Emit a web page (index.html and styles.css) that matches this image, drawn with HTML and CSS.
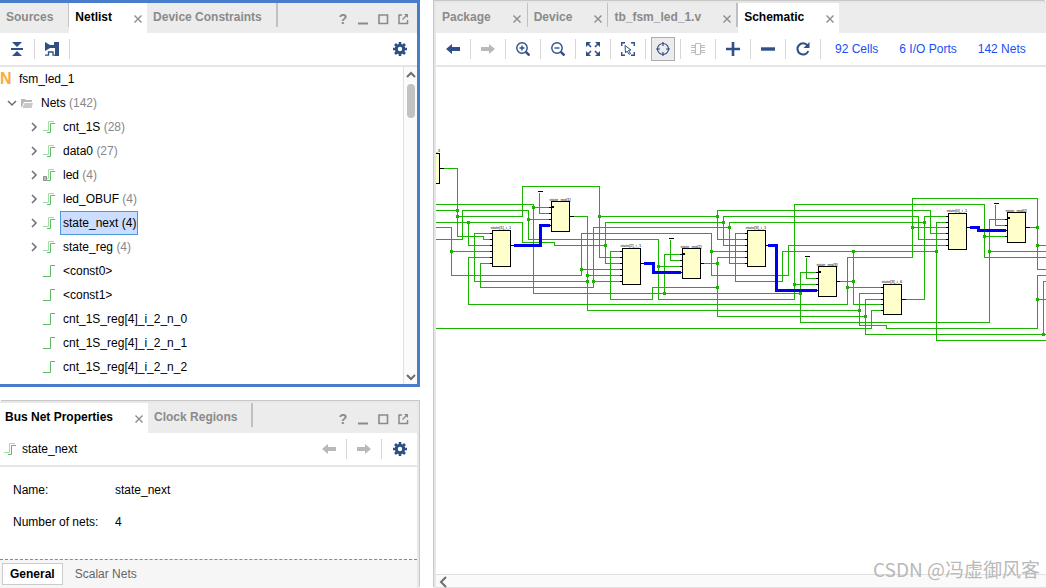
FILE: index.html
```html
<!DOCTYPE html>
<html lang="en">
<head>
    <meta charset="UTF-8">
    <title>fsm_led_1 - Schematic</title>
    <link rel="stylesheet" href="styles.css">
</head>
<body>

<!-- shared icons -->
<svg class="defs" aria-hidden="true">
    <symbol id="i-close" viewBox="0 0 8 8"><path d="M.5.5l7 7M7.500.5l-7 7" stroke="#8c8c8c" stroke-width="1.4"/></symbol>
    <symbol id="i-min" viewBox="0 0 12 12"><path d="M1 10.500h10" stroke="#8a8a8a" stroke-width="2"/></symbol>
    <symbol id="i-max" viewBox="0 0 12 12"><path d="M2 2h8.500v8.500H2z" fill="none" stroke="#8a8a8a" stroke-width="1.600"/></symbol>
    <symbol id="i-pop" viewBox="0 0 12 12"><path d="M5 2H2v8.500h8.500V7" fill="none" stroke="#8a8a8a" stroke-width="1.500"/><path d="M5.500 6.500L10 2" stroke="#8a8a8a" stroke-width="1.300"/><path d="M7 1h4v4z" fill="#8a8a8a"/></symbol>
    <symbol id="i-gear" viewBox="0 0 14 14"><circle cx="7" cy="7" r="3.700" fill="none" stroke="#2f4f86" stroke-width="3"/><path d="M7 0v3M7 11v3M0 7h3M11 7h3M2 2l2 2M10 10l2 2M12 2l-2 2M4 10l-2 2" stroke="#2f4f86" stroke-width="2.600"/></symbol>
    <symbol id="i-back" viewBox="0 0 14 14"><path d="M0 7l6-5v3h8v4H6v3z" fill="currentColor"/></symbol>
    <symbol id="i-fwd" viewBox="0 0 14 14"><path d="M14 7L8 2v3H0v4h8v3z" fill="currentColor"/></symbol>
    <symbol id="i-bus" viewBox="0 0 12 12"><path d="M0 9.500h5.500v-9H11" fill="none" stroke="#a5dba7"/><path d="M4 11.500h3.500v-9H12" fill="none" stroke="#5dba62"/></symbol>
    <symbol id="i-net" viewBox="0 0 12 12"><path d="M0 11.500h7.500V.5H12" fill="none" stroke="#5dba62"/></symbol>
    <symbol id="i-right" viewBox="0 0 12 12"><path d="M4 2l4 4-4 4" fill="none" stroke="#6e6e6e" stroke-width="1.500"/></symbol>
    <symbol id="i-down" viewBox="0 0 12 12"><path d="M2 4l4 4 4-4" fill="none" stroke="#6e6e6e" stroke-width="1.500"/></symbol>
    <symbol id="i-folder" viewBox="0 0 12 12"><path d="M0 10V2h4l1 1h6v2H3L1 10z" fill="#b9b9b9"/><path d="M3.500 6H12l-1.500 5H1.500z" fill="#c9c9c9"/></symbol>
</svg>

<div class="workspace">
    <div class="side">

        <section class="panel netlist">
            <header class="tabs">
                <button class="tab plain">Sources</button>
                <button class="tab active">Netlist <svg class="close"><use href="#i-close"/></svg></button>
                <button class="tab plain last">Device Constraints</button>
                <div class="window-buttons">
                    <button aria-label="Help">?</button>
                    <button aria-label="Minimize"><svg><use href="#i-min"/></svg></button>
                    <button aria-label="Maximize"><svg><use href="#i-max"/></svg></button>
                    <button aria-label="Float"><svg><use href="#i-pop"/></svg></button>
                </div>
            </header>
            <div class="toolbar">
                <button class="tool" aria-label="Collapse all"><svg viewBox="0 0 14 14"><path d="M2 0h10L7 5zM1 6h12v2H1zM2 14h10L7 9z" fill="#2f4f86"/></svg></button>
                <button class="tool" aria-label="Show in schematic"><svg viewBox="0 0 14 14"><path d="M0 0l5 3h4V0h5v14h-4V6H5L0 9z" fill="#2f4f86"/><path d="M0 13.200h3.500V10H8v3.200h3" fill="none" stroke="#2f4f86" stroke-width="1.300"/></svg></button>
                <button class="tool push" aria-label="Settings"><svg><use href="#i-gear"/></svg></button>
            </div>
            <div class="tree-area">
                <ul class="tree">
                    <li><div class="row root"><span class="n-icon">N</span><span class="label">fsm_led_1</span></div></li>
                    <li><div class="row level1"><svg><use href="#i-down"/></svg><svg><use href="#i-folder"/></svg><span class="label">Nets <em>(142)</em></span></div>
                        <ul>
                            <li class="row"><svg><use href="#i-right"/></svg><svg><use href="#i-bus"/></svg><span class="label">cnt_1S <em>(28)</em></span></li>
                            <li class="row"><svg><use href="#i-right"/></svg><svg><use href="#i-bus"/></svg><span class="label">data0 <em>(27)</em></span></li>
                            <li class="row"><svg><use href="#i-right"/></svg><svg viewBox="0 0 12 12"><use href="#i-bus"/><path d="M.5 7.500h3v4h-3z" fill="#bbb" stroke="#8f8f8f"/></svg><span class="label">led <em>(4)</em></span></li>
                            <li class="row"><svg><use href="#i-right"/></svg><svg><use href="#i-bus"/></svg><span class="label">led_OBUF <em>(4)</em></span></li>
                            <li class="row"><svg><use href="#i-right"/></svg><svg><use href="#i-bus"/></svg><span class="label selected">state_next <em>(4)</em></span></li>
                            <li class="row"><svg><use href="#i-right"/></svg><svg><use href="#i-bus"/></svg><span class="label">state_reg <em>(4)</em></span></li>
                            <li class="row leaf"><svg><use href="#i-net"/></svg><span class="label">&lt;const0&gt;</span></li>
                            <li class="row leaf"><svg><use href="#i-net"/></svg><span class="label">&lt;const1&gt;</span></li>
                            <li class="row leaf"><svg><use href="#i-net"/></svg><span class="label">cnt_1S_reg[4]_i_2_n_0</span></li>
                            <li class="row leaf"><svg><use href="#i-net"/></svg><span class="label">cnt_1S_reg[4]_i_2_n_1</span></li>
                            <li class="row leaf"><svg><use href="#i-net"/></svg><span class="label">cnt_1S_reg[4]_i_2_n_2</span></li>
                        </ul>
                    </li>
                </ul>
                <div class="scrollbar">
                    <svg viewBox="0 0 12 12"><path d="M2 8l4-4 4 4" fill="none" stroke="#6e6e6e" stroke-width="2"/></svg>
                    <span class="thumb"></span>
                    <svg viewBox="0 0 12 12"><path d="M2 4l4 4 4-4" fill="none" stroke="#6e6e6e" stroke-width="2"/></svg>
                </div>
            </div>
        </section>

        <section class="panel properties">
            <header class="tabs">
                <button class="tab active">Bus Net Properties <svg class="close"><use href="#i-close"/></svg></button>
                <button class="tab plain last">Clock Regions</button>
                <div class="window-buttons">
                    <button aria-label="Help">?</button>
                    <button aria-label="Minimize"><svg><use href="#i-min"/></svg></button>
                    <button aria-label="Maximize"><svg><use href="#i-max"/></svg></button>
                    <button aria-label="Float"><svg><use href="#i-pop"/></svg></button>
                </div>
            </header>
            <div class="toolbar">
                <span class="object"><svg><use href="#i-bus"/></svg>state_next</span>
                <button class="tool off push" aria-label="Previous"><svg><use href="#i-back"/></svg></button>
                <button class="tool off" aria-label="Next"><svg><use href="#i-fwd"/></svg></button>
                <button class="tool" aria-label="Settings"><svg><use href="#i-gear"/></svg></button>
            </div>
            <dl class="props">
                <dt>Name:</dt><dd>state_next</dd>
                <dt>Number of nets:</dt><dd>4</dd>
            </dl>
            <nav class="subtabs">
                <button class="current">General</button>
                <button>Scalar Nets</button>
            </nav>
        </section>
    </div>

    <main class="panel schematic">
        <header class="tabs">
            <button class="tab">Package <svg class="close"><use href="#i-close"/></svg></button>
            <button class="tab">Device <svg class="close"><use href="#i-close"/></svg></button>
            <button class="tab last">tb_fsm_led_1.v <svg class="close"><use href="#i-close"/></svg></button>
            <button class="tab active">Schematic <svg class="close"><use href="#i-close"/></svg></button>
        </header>
        <div class="toolbar">
            <button class="tool" aria-label="Back"><svg><use href="#i-back"/></svg></button>
            <button class="tool off" aria-label="Forward"><svg><use href="#i-fwd"/></svg></button>
            <button class="tool" aria-label="Zoom in"><svg viewBox="0 0 14 14" fill="none" stroke="#2f4f86"><circle cx="6" cy="6" r="5.200" stroke-width="1.400"/><path d="M9.800 9.800L13.500 13.500" stroke-width="2.400"/><path d="M3.500 6h5M6 3.500v5" stroke-width="1.400"/></svg></button>
            <button class="tool" aria-label="Zoom out"><svg viewBox="0 0 14 14" fill="none" stroke="#2f4f86"><circle cx="6" cy="6" r="5.200" stroke-width="1.400"/><path d="M9.800 9.800L13.500 13.500" stroke-width="2.400"/><path d="M3.500 6h5" stroke-width="1.400"/></svg></button>
            <button class="tool" aria-label="Zoom fit"><svg viewBox="0 0 14 14"><path d="M0 0h5L0 5zM14 0v5L9 0zM0 14V9l5 5zM14 14H9l5-5z" fill="#2f4f86"/><path d="M1 1l4 4M13 1L9 5M1 13l4-4M13 13L9 9" stroke="#2f4f86" stroke-width="1.600"/></svg></button>
            <button class="tool" aria-label="Zoom to selection"><svg viewBox="0 0 14 14" fill="none" stroke="#2f4f86"><path d="M.7 4V.7H4M10 .7h3.300V4M13.300 10v3.300H10M4 13.300H.7V10" stroke-width="1.400"/><path d="M4 3.500l6 4.500-2.500.3 2 3.200-1.500.8-1.800-3.200L4.500 11z"/></svg></button>
            <button class="tool on" aria-label="Autofit selection"><svg viewBox="0 0 14 14" fill="none" stroke="#2f4f86"><circle cx="7" cy="7" r="5.500" stroke-width="1.200"/><path d="M7 0v4M7 10v4M0 7h4M10 7h4" stroke-width="1.200"/></svg></button>
            <button class="tool off" aria-label="Expand cell"><svg viewBox="0 0 14 14" fill="none" stroke="#bdbdbd"><path d="M4.500 1.500h5v11h-5z"/><path d="M0 3.500h4v2H0M0 8.500h4v2H0M14 3.500h-4v2h4M14 8.500h-4v2h4"/></svg></button>
            <button class="tool" aria-label="Add"><svg viewBox="0 0 14 14"><path d="M0 7h14M7 0v14" stroke="#2f4f86" stroke-width="2.600"/></svg></button>
            <button class="tool" aria-label="Remove"><svg viewBox="0 0 14 14"><path d="M0 7h14" stroke="#2f4f86" stroke-width="3.400"/></svg></button>
            <button class="tool" aria-label="Reload"><svg viewBox="0 0 14 14"><path d="M11.500 3.500A5.600 5.600 0 1 0 12.300 9" fill="none" stroke="#2f4f86" stroke-width="2"/><path d="M13.500 0v6h-6z" fill="#2f4f86"/></svg></button>
            <div class="counts">
                <a href="#cells">92 Cells</a>
                <a href="#ports">6 I/O Ports</a>
                <a href="#nets">142 Nets</a>
            </div>
        </div>
        <div class="canvas">
            <svg class="diagram">
                <g transform="translate(-435.500 -66.500)">
                    <!-- nets -->
                    <path class="net" d="
                        M443 168H457V236H483V239H489 M435 204H533V293H800 M533 207H548
                        M435 210H457 M457 216H522V186H599V257H619 M435 222H522V242H554V245H605
                        M468 222V245H489 M435 227H451V275H581V233H711V275H788V245H945
                        M451 251H489 M435 239H462V210H528V239H658V299H794V204H984V257H1046
                        M528 219H548 M489 233H474V281H587 M573 216H587V310H859
                        M489 257H468V304H847V257H912V198H1037V269H1046
                        M489 263H480V287H593V227H729 M581 269H619 M587 275H619 M593 281H619
                        M599 216H717 M605 245V222H723 M605 245V263H619
                        M745 239H717V210H930V233H945 M745 245H723V216H918V239H945
                        M745 263H729V222H924 M711 251H745 M745 257H717V316H865
                        M619 251H610V299H652V287H717 M702 263H717 M658 266H679
                        M679 254H664V293 M435 328H871V310H880
                        M745 233H735V281H782V251H936 M794 284H815
                        M815 272H800V322H989V219H1004 M838 281H853 M853 251V304H880
                        M847 287H880 M880 293H859V325H886V328H1037V275H1046
                        M880 299H865V334H1046 M904 299H924V216H945 M912 227H945
                        M945 222H936V340H1046 M984 236H1004 M989 251H1046
                        M1027 227H1037 M1037 245H1046 M1037 299H1046 M1043 334V281H1046
                        M539 192V213H548 M670 239V260H679 M806 257V278H815 M995 204V225H1004"/>
                    <!-- junctions: zero length strokes with square caps -->
                    <path class="dot" d="M457 210h0M457 216h0M468 222h0M451 251h0M533 207h0M528 219h0
                        M581 269h0M587 275h0M587 281h0M593 281h0M599 216h0M605 245h0M658 266h0M664 293h0
                        M717 216h0M723 222h0M729 227h0M711 251h0M717 263h0M717 287h0M794 284h0M800 293h0
                        M853 251h0M853 281h0M847 287h0M859 310h0M865 316h0M912 227h0M924 222h0M936 251h0
                        M984 236h0M989 251h0M1037 227h0M1037 245h0M1037 299h0M1043 334h0"/>
                    <!-- pins -->
                    <path class="pin" d="M439 168h4 M537 191h5 M668 238h5 M804 256h5 M993 203h5
                        M489 233h3M489 239h3M489 245h3M489 251h3M489 257h3M489 263h3M510 245h4
                        M548 207h5M548 213h3M548 219h3M548 225h3M569 216h4
                        M619 251h3M619 257h3M619 263h3M619 269h3M619 275h3M619 281h3M640 263h4
                        M679 254h5M679 260h3M679 266h3M679 272h3M700 263h3
                        M744 233h3M744 239h3M744 245h3M744 251h3M744 257h3M744 263h3M765 245h4
                        M815 272h5M815 278h3M815 284h3M815 290h3M836 281h3
                        M880 287h3M880 293h3M880 299h3M880 304h3M880 310h3M901 299h4
                        M945 216h3M945 222h3M945 227h3M945 233h3M945 239h3M945 245h3M966 227h4
                        M1004 219h5M1004 225h3M1004 230h3M1004 236h3M1025 227h4"/>
                    <!-- selected bus -->
                    <path class="bus" d="M513 245H540V225H549 M643 263H653V272H680 M767 245H776V290H816 M969 227H978V230H1005"/>
                    <!-- cells -->
                    <g class="cell">
                        <rect x="430" y="153" width="9" height="30"/>
                        <rect x="492" y="230" width="18" height="36"/>
                        <rect x="551" y="201" width="18" height="30"/>
                        <rect x="622" y="248" width="18" height="36"/>
                        <rect x="682" y="248" width="18" height="30"/>
                        <rect x="747" y="230" width="18" height="36"/>
                        <rect x="818" y="266" width="18" height="30"/>
                        <rect x="883" y="284" width="18" height="30"/>
                        <rect x="948" y="213" width="18" height="36"/>
                        <rect x="1007" y="212" width="18" height="30"/>
                    </g>
                    <!-- clock marks -->
                    <path class="pin" d="M551 206h2v1h-2 M682 253h2v1h-2 M818 271h2v1h-2 M1007 217h2v1h-2"/>
                    <g class="names">
                        <text x="435" y="151">_3</text>
                        <text x="490" y="228">state[1]_i_1</text>
                        <text x="549" y="200">state_reg[1]</text>
                        <text x="620" y="246">state[2]_i_1</text>
                        <text x="680" y="247">state_reg[2]</text>
                        <text x="745" y="228">state[3]_i_1</text>
                        <text x="816" y="265">state_reg[3]</text>
                        <text x="881" y="282">state[3]_i_6</text>
                        <text x="946" y="211">state[0]_i_1</text>
                        <text x="1005" y="211">state_reg[0]</text>
                    </g>
                </g>
            </svg>
            <div class="hscroll"><svg viewBox="0 0 12 12"><path d="M8 1L3 6l5 5" fill="none" stroke="#6e6e6e" stroke-width="2"/></svg></div>
            <span class="watermark">CSDN @冯虚御风客</span>
        </div>
    </main>
</div>

</body>
</html>
```
FILE: styles.css
```css
* { box-sizing: border-box; }
body { margin: 0; font: 12px/16px "Liberation Sans", Arial, sans-serif; color: #000; background: #fff; }
button { font: inherit; color: inherit; background: none; border: none; padding: 0; }
svg { display: block; flex: none; }
ul, dl, dd { margin: 0; padding: 0; list-style: none; }
.defs { position: absolute; width: 0; height: 0; }

.workspace { display: flex; gap: 13px; height: 100vh; overflow: hidden; }
.side { display: flex; flex-direction: column; gap: 13px; width: 420px; flex: none; }
.panel { display: flex; flex-direction: column; min-width: 0; min-height: 0; }
.netlist { flex: 1; border: 3px solid #487dcb; border-left: none; }
.properties { margin: 1px 1px 0 0; border-top: 2px solid #e8e8e8; border-right: 2px solid #e8e8e8; box-shadow: 1px -1px 0 #c8c8c8; }
.schematic { flex: 1; margin: 1px 0 0 1px; border-top: 2px solid #e6e6e6; border-left: 2px solid #e6e6e6; box-shadow: -1px -1px 0 #c8c8c8; }

/* tab strips */
.tabs { display: flex; height: 30px; flex: none; background: #ececec; }
.tab { display: flex; gap: 22px; height: 24px; padding: 2px 5px 0 6px; line-height: 24px; font-weight: bold; color: #8a8a8a; border-right: 1px solid #c0c0c0; white-space: nowrap; }
.tab:first-child { padding-right: 6px; }
.tab.plain { padding-right: 14px; }
.tab.plain:first-child { padding-right: 15px; }
.tab.last { border-right-width: 2px; }
.tab.active { height: 30px; color: #000; background: #fff; border-right: none; }
.close { width: 8px; height: 8px; margin-top: 10px; }
.window-buttons { display: flex; margin-left: auto; padding: 6px 4px 0 0; }
.window-buttons button { display: flex; justify-content: center; align-items: center; width: 20px; height: 20px; font-size: 14px; font-weight: bold; color: #8a8a8a; }
.window-buttons svg { width: 12px; height: 12px; }
.properties .tab.active { padding: 2px 5px 0 5px; }

/* toolbars */
.toolbar { display: flex; align-items: center; height: 34px; flex: none; border-bottom: 2px solid #e5e5e5; }
.tool { display: flex; justify-content: center; align-items: center; width: 35px; height: 20px; color: #2f4f86; border-right: 1px solid #d6d6d6; }
.tool svg { width: 14px; height: 14px; }
.tool.off { color: #b9b9b9; }
.tool.on svg { width: 24px; height: 24px; padding: 4px; background: #ececec; border: 1px solid #adadad; }
.tool[aria-label="Settings"] { border-right: none; }
.push { margin-left: auto; }
.object { display: flex; align-items: center; gap: 6px; padding-left: 4px; }
.object svg { width: 12px; height: 12px; }
.counts { display: flex; gap: 21px; padding-left: 14px; white-space: nowrap; }
.counts a { color: #1450f5; text-decoration: none; }

/* netlist tree */
.tree-area { display: flex; flex: 1; min-height: 0; }
.tree { flex: 1; overflow: hidden; }
.row { display: flex; align-items: center; gap: 3px; height: 24px; padding-left: 28px; white-space: nowrap; }
.row.level1 { padding-left: 6px; }
.row.root { padding-left: 0; }
.row.leaf { padding-left: 43px; }
.row svg { width: 12px; height: 12px; }
.row .label { height: 24px; margin-left: 2px; padding: 0 2px; line-height: 22px; border: 1px solid transparent; }
.row em { font-style: normal; color: #888; }
.row .selected { padding-right: 1px; background: #ccdeff; border-color: #4a98d8; }
.row .selected em { color: #000; }
.n-icon { width: 11px; font-size: 16px; font-weight: bold; color: #fbab3a; }
.scrollbar { display: flex; flex-direction: column; align-items: center; width: 14px; padding: 2px 0 1px; background: #fbfbfb; border-left: 1px solid #e0e0e0; }
.scrollbar svg { width: 12px; height: 12px; }
.thumb { width: 8px; height: 34px; margin: 3px 0 auto; background: #c2c2c2; border-radius: 4px; }

/* properties */
.props { display: grid; grid-template-columns: 102px 1fr; padding: 7px 0 21px 13px; line-height: 32px; }
.subtabs { display: flex; align-items: center; height: 29px; padding-left: 2px; background: #f6f6f6; border-top: 1px dashed #8a8a8a; }
.subtabs button { height: 22px; padding: 0 12px; color: #666; }
.subtabs .current { padding: 0 7px; font-weight: bold; color: #000; background: #fff; border: 1px solid #ccc; }

/* schematic */
.canvas { position: relative; display: flex; flex-direction: column; flex: 1; min-height: 0; }
.diagram { flex: 1; width: 100%; min-height: 0; }
.diagram path, .diagram rect { shape-rendering: crispEdges; fill: none; }
.diagram .net { stroke: #18b400; }
.diagram .dot { stroke: #18b400; stroke-width: 3; stroke-linecap: square; }
.diagram .pin { stroke: #000; }
.diagram .bus { stroke: #0000f0; stroke-width: 3; }
.diagram .cell rect { fill: #ffffcc; stroke: #000; }
.names { font-size: 4px; fill: #000; }
.hscroll { height: 14px; flex: none; padding: 1px 2px; background: #fafafa; border-top: 1px solid #e0e0e0; border-bottom: 1px solid #e0e0e0; }
.hscroll svg { width: 12px; height: 12px; }
.watermark { position: absolute; right: 6px; bottom: 5px; font: 19px/28px "Noto Sans CJK SC", sans-serif; color: #b9b9b9; }
```
